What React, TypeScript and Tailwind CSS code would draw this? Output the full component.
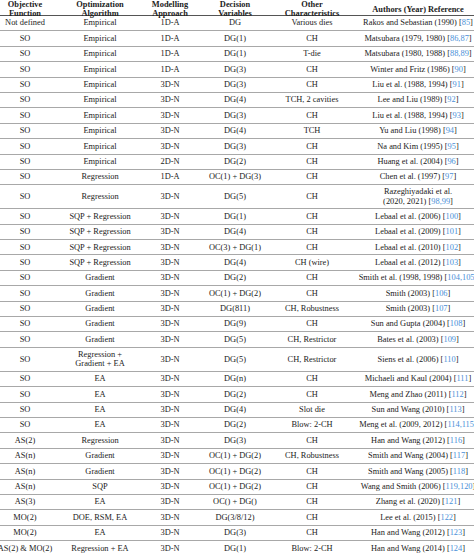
import React from "react";

type Row = {
  o: string;
  a: React.ReactNode;
  m: string;
  d: string;
  c: string;
  au: React.ReactNode;
  r: string;
  tall?: boolean;
};

const Ref = ({ r }: { r: string }) => (
  <>
    [<span className="text-[#4a8fd8]">{r}</span>]
  </>
);

const rows: Row[] = [
  { o: "Not defined", a: "Empirical", m: "1D-A", d: "DG", c: "Various dies", au: "Rakos and Sebastian (1990)", r: "85" },
  { o: "SO", a: "Empirical", m: "1D-A", d: "DG(1)", c: "CH", au: "Matsubara (1979, 1980)", r: "86,87" },
  { o: "SO", a: "Empirical", m: "1D-A", d: "DG(1)", c: "T-die", au: "Matsubara (1980, 1988)", r: "88,89" },
  { o: "SO", a: "Empirical", m: "1D-A", d: "DG(3)", c: "CH", au: "Winter and Fritz (1986)", r: "90" },
  { o: "SO", a: "Empirical", m: "3D-N", d: "DG(3)", c: "CH", au: "Liu et al. (1988, 1994)", r: "91" },
  { o: "SO", a: "Empirical", m: "3D-N", d: "DG(4)", c: "TCH, 2 cavities", au: "Lee and Liu (1989)", r: "92" },
  { o: "SO", a: "Empirical", m: "3D-N", d: "DG(3)", c: "CH", au: "Liu et al. (1988, 1994)", r: "93" },
  { o: "SO", a: "Empirical", m: "3D-N", d: "DG(4)", c: "TCH", au: "Yu and Liu (1998)", r: "94" },
  { o: "SO", a: "Empirical", m: "3D-N", d: "DG(3)", c: "CH", au: "Na and Kim (1995)", r: "95" },
  { o: "SO", a: "Empirical", m: "2D-N", d: "DG(2)", c: "CH", au: "Huang et al. (2004)", r: "96" },
  { o: "SO", a: "Regression", m: "1D-A", d: "OC(1) + DG(3)", c: "CH", au: "Chen et al. (1997)", r: "97" },
  {
    o: "SO",
    a: "Regression",
    m: "3D-N",
    d: "DG(5)",
    c: "CH",
    au: (
      <>
        Razeghiyadaki et al.
        <br />
        (2020, 2021)
      </>
    ),
    r: "98,99",
    tall: true,
  },
  { o: "SO", a: "SQP + Regression", m: "3D-N", d: "DG(1)", c: "CH", au: "Lebaal et al. (2006)", r: "100" },
  { o: "SO", a: "SQP + Regression", m: "3D-N", d: "DG(4)", c: "CH", au: "Lebaal et al. (2009)", r: "101" },
  { o: "SO", a: "SQP + Regression", m: "3D-N", d: "OC(3) + DG(1)", c: "CH", au: "Lebaal et al. (2010)", r: "102" },
  { o: "SO", a: "SQP + Regression", m: "3D-N", d: "DG(4)", c: "CH (wire)", au: "Lebaal et al. (2012)", r: "103" },
  { o: "SO", a: "Gradient", m: "3D-N", d: "DG(2)", c: "CH", au: "Smith et al. (1998, 1998)", r: "104,105" },
  { o: "SO", a: "Gradient", m: "3D-N", d: "OC(1) + DG(2)", c: "CH", au: "Smith (2003)", r: "106" },
  { o: "SO", a: "Gradient", m: "3D-N", d: "DG(811)", c: "CH, Robustness", au: "Smith (2003)", r: "107" },
  { o: "SO", a: "Gradient", m: "3D-N", d: "DG(9)", c: "CH", au: "Sun and Gupta (2004)", r: "108" },
  { o: "SO", a: "Gradient", m: "3D-N", d: "DG(5)", c: "CH, Restrictor", au: "Bates et al. (2003)", r: "109" },
  {
    o: "SO",
    a: (
      <>
        Regression +
        <br />
        Gradient + EA
      </>
    ),
    m: "3D-N",
    d: "DG(5)",
    c: "CH, Restrictor",
    au: "Siens et al. (2006)",
    r: "110",
    tall: true,
  },
  { o: "SO", a: "EA", m: "3D-N", d: "DG(n)", c: "CH", au: "Michaeli and Kaul (2004)", r: "111" },
  { o: "SO", a: "EA", m: "3D-N", d: "DG(2)", c: "CH", au: "Meng and Zhao (2011)", r: "112" },
  { o: "SO", a: "EA", m: "3D-N", d: "DG(4)", c: "Slot die", au: "Sun and Wang (2010)", r: "113" },
  { o: "SO", a: "EA", m: "3D-N", d: "DG(2)", c: "Blow: 2-CH", au: "Meng et al. (2009, 2012)", r: "114,115" },
  { o: "AS(2)", a: "Regression", m: "3D-N", d: "DG(3)", c: "CH", au: "Han and Wang (2012)", r: "116" },
  { o: "AS(n)", a: "Gradient", m: "3D-N", d: "OC(1) + DG(2)", c: "CH, Robustness", au: "Smith and Wang (2004)", r: "117" },
  { o: "AS(n)", a: "Gradient", m: "3D-N", d: "OC(1) + DG(2)", c: "CH", au: "Smith and Wang (2005)", r: "118" },
  { o: "AS(n)", a: "SQP", m: "3D-N", d: "OC(1) + DG(2)", c: "CH", au: "Wang and Smith (2006)", r: "119,120" },
  { o: "AS(3)", a: "EA", m: "3D-N", d: "OC() + DG()", c: "CH", au: "Zhang et al. (2020)", r: "121" },
  { o: "MO(2)", a: "DOE, RSM, EA", m: "3D-N", d: "DG(3/8/12)", c: "CH", au: "Lee et al. (2015)", r: "122" },
  { o: "MO(2)", a: "EA", m: "3D-N", d: "DG(3)", c: "CH", au: "Han and Wang (2012)", r: "123" },
  { o: "AS(2) & MO(2)", a: "Regression + EA", m: "3D-N", d: "DG(1)", c: "Blow: 2-CH", au: "Han and Wang (2014)", r: "124" },
];

const cell = "flex items-center justify-center whitespace-nowrap text-center";
const cols = "grid grid-cols-[50px_100px_40px_90px_64px_148px]";

export default function App() {
  return (
    <div className="w-[474px] h-[556px] overflow-hidden bg-white font-['Liberation_Serif',serif] text-[8.4px] text-[#222]">
      <div className="w-[492px]">
        <div className={`${cols} h-[16px] border-b-[1.5px] border-[#555] font-bold leading-[9px]`}>
          <div className={cell}>
            Objective
            <br />
            Function
          </div>
          <div className={cell}>
            Optimization
            <br />
            Algorithm
          </div>
          <div className={cell}>
            Modelling
            <br />
            Approach
          </div>
          <div className={cell}>
            Decision
            <br />
            Variables
          </div>
          <div className={cell}>
            Other
            <br />
            Characteristics
          </div>
          <div className={cell}>Authors (Year) Reference</div>
        </div>
        {rows.map((row, i) => (
          <div
            key={i}
            className={`${cols} border-b border-[#a8a8a8] leading-[9.5px] ${row.tall ? "h-[24px]" : "h-[15.4px]"}`}
          >
            <div className={cell}>{row.o}</div>
            <div className={cell}>
              <div>{row.a}</div>
            </div>
            <div className={cell}>{row.m}</div>
            <div className={cell}>{row.d}</div>
            <div className={cell}>{row.c}</div>
            <div className={cell}>
              <div>
                {row.au} <Ref r={row.r} />
              </div>
            </div>
          </div>
        ))}
      </div>
    </div>
  );
}
